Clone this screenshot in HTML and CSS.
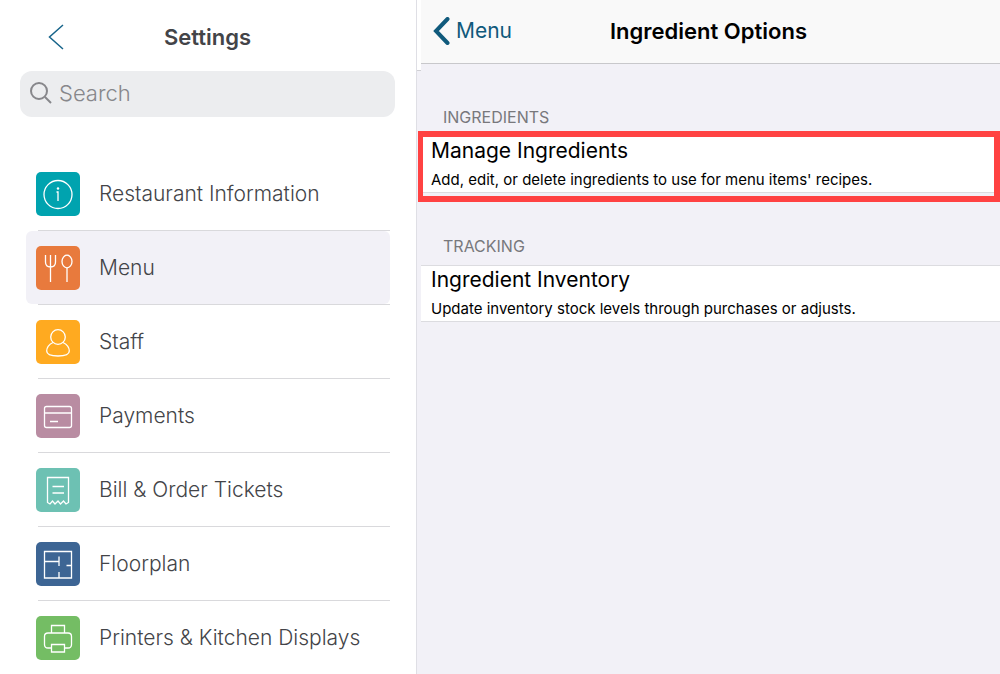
FILE: index.html
```html
<!DOCTYPE html>
<html lang="en">
<head>
    <meta charset="UTF-8">
    <meta name="viewport" content="width=device-width, initial-scale=1.0">
    <title>Settings - Ingredient Options</title>
    <link rel="stylesheet" href="styles.css">
</head>
<body>
    <div class="app">
        <aside class="sidebar">
            <header class="sidebar-header">
                <button type="button" class="back" aria-label="Back">
                    <svg width="16" height="26" viewBox="0 0 16 26"><path d="M15 1 1.500 13 15 25"/></svg>
                </button>
                <h1>Settings</h1>
            </header>

            <form class="search">
                <svg width="22" height="22" viewBox="0 0 22 22"><circle cx="9" cy="9" r="8"/><path d="m15 15 6 6"/></svg>
                <input type="search" aria-label="Search" placeholder="Search">
            </form>

            <nav>
                <ul class="settings-list">
                    <li>
                        <a href="#restaurant">
                            <span class="icon teal">
                                <svg viewBox="0 0 44 44"><circle cx="22" cy="22.500" r="14"/><path d="M20.500 20H22v9"/><circle class="dot" cx="22" cy="16.500" r="1.200"/></svg>
                            </span>
                            Restaurant Information
                        </a>
                    </li>
                    <li>
                        <a href="#menu" class="selected" aria-current="page">
                            <span class="icon orange">
                                <svg viewBox="0 0 44 44"><path d="M9.500 9v7q0 5 5 5t5-5V9M14.500 9v27M31 22v14"/><ellipse cx="31" cy="15.500" rx="5" ry="6.300"/></svg>
                            </span>
                            Menu
                        </a>
                    </li>
                    <li>
                        <a href="#staff">
                            <span class="icon yellow">
                                <svg viewBox="0 0 44 44"><circle cx="22" cy="17" r="7.300"/><path d="M17 22.500c-4 2-6.300 5-6.300 8.500 0 3.500 4.800 5 11.300 5s11.300-1.500 11.300-5c0-3.500-2.300-6.500-6.300-8.500"/></svg>
                            </span>
                            Staff
                        </a>
                    </li>
                    <li>
                        <a href="#payments">
                            <span class="icon mauve">
                                <svg viewBox="0 0 44 44"><rect x="8.500" y="12.500" width="27" height="21" rx="2"/><path d="M8.500 19h27M14 27.500h8"/></svg>
                            </span>
                            Payments
                        </a>
                    </li>
                    <li>
                        <a href="#tickets">
                            <span class="icon mint">
                                <svg viewBox="0 0 44 44"><path d="M11.500 34.500V9.500h21v25l-2.500 1.500-2.500-3-3 3-2.500-3-3 3-2.500-3-2.500 3zM16.500 18.500H28M16.500 25H28"/></svg>
                            </span>
                            Bill &amp; Order Tickets
                        </a>
                    </li>
                    <li>
                        <a href="#floorplan">
                            <span class="icon blue">
                                <svg viewBox="0 0 44 44"><path d="M8.500 9.500h27v26.500h-27zM8.500 19.500H23M23 14.500v9.500M23 30v6M30.500 23.500h5"/></svg>
                            </span>
                            Floorplan
                        </a>
                    </li>
                    <li>
                        <a href="#printers">
                            <span class="icon green">
                                <svg viewBox="0 0 44 44"><path d="M15.500 17V9.500h13V17M15.500 32H12q-3.500 0-3.500-3.500v-8Q8.500 17 12 17h20q3.500 0 3.500 3.500v8q0 3.500-3.500 3.500h-3.500M15.500 28.500h13V36h-13z"/></svg>
                            </span>
                            Printers &amp; Kitchen Displays
                        </a>
                    </li>
                </ul>
            </nav>
        </aside>

        <div class="edge"></div>

        <main class="detail">
            <header class="detail-header">
                <a href="#menu" class="menu-link">
                    <svg width="17" height="28" viewBox="0 0 17 28"><path d="M14.500 2 3 14l11.500 12"/></svg>
                    Menu
                </a>
                <h2>Ingredient Options</h2>
            </header>

            <section>
                <h3>INGREDIENTS</h3>
                <a href="#manage" class="option highlighted">
                    <span class="option-title">Manage Ingredients</span>
                    <span class="option-text">Add, edit, or delete ingredients to use for menu items' recipes.</span>
                </a>
            </section>

            <section>
                <h3>TRACKING</h3>
                <a href="#inventory" class="option">
                    <span class="option-title">Ingredient Inventory</span>
                    <span class="option-text">Update inventory stock levels through purchases or adjusts.</span>
                </a>
            </section>
        </main>
    </div>
</body>
</html>
```
FILE: styles.css
```css
* {
    box-sizing: border-box;
}

body {
    margin: 0;
    background: #fff;
    color: #434448;
    font-family: Inter, "Liberation Sans", sans-serif;
}

h1, h2, h3, ul {
    margin: 0;
    padding: 0;
}

a {
    color: inherit;
    text-decoration: none;
}

svg {
    fill: none;
    stroke: currentColor;
}

.app {
    display: grid;
    grid-template-columns: minmax(300px, 416px) 5px 1fr;
    min-height: 100vh;
    overflow: hidden;
}

/* Sidebar */
.sidebar {
    padding: 0 21px 0 20px;
}

.sidebar-header {
    display: grid;
    grid-template-columns: 1fr auto 1fr;
    align-items: center;
    height: 71px;
    padding: 2px 0 0 28px;
    margin-right: 28px;
}

.back {
    display: flex;
    padding: 0;
    border: 0;
    background: none;
    color: #17648a;
    cursor: pointer;
}

.back svg {
    stroke-width: 1.5;
}

h1 {
    font-size: 22px;
    font-weight: 600;
}

.search {
    display: flex;
    align-items: center;
    gap: 7px;
    height: 46px;
    padding: 0 10px 2px;
    border-radius: 12px;
    background: #ecedef;
    color: #87878b;
}

.search svg {
    flex: none;
    stroke-width: 2;
}

.search input {
    flex: 1;
    min-width: 0;
    padding: 0;
    border: 0;
    outline: none;
    background: none;
    font: 300 22px Inter, sans-serif;
}

.search input::placeholder {
    color: #87878b;
}

.settings-list {
    margin: 40px 5px 0 6px;
    list-style: none;
}

.settings-list li:not(:last-child)::after {
    content: "";
    display: block;
    height: 1px;
    margin-left: 12px;
    background: #d9d9dc;
}

.settings-list a {
    display: flex;
    align-items: center;
    gap: 19px;
    height: 73px;
    padding-left: 10px;
    border-radius: 6px;
    font-size: 21px;
    font-weight: 300;
}

.settings-list a.selected {
    background: #f2f1f7;
}

.icon {
    flex: none;
    width: 44px;
    height: 44px;
    border-radius: 5px;
    color: #fff;
}

.icon svg {
    display: block;
    stroke-width: 1.3;
}

.dot {
    fill: #fff;
    stroke: none;
}

.teal { background: #00a3af; }
.orange { background: #e87a3d; }
.yellow { background: #ffaa20; }
.mauve { background: #b98ca2; }
.mint { background: #6dc1b3; }
.blue { background: #3d6594; }
.green { background: #74bd64; }

/* Divider between the two panes */
.edge {
    border-left: 1px solid #dfdfe5;
    background: #f2f1f7;
}

.edge::before {
    content: "";
    display: block;
    height: 70px;
    border-bottom: 1px solid #d0d0d4;
    background: #fff;
}

/* Detail pane */
.detail {
    background: #f2f1f7;
    color: #000;
}

.detail-header {
    display: grid;
    grid-template-columns: 1fr auto 1fr;
    align-items: center;
    height: 64px;
    padding: 0 16px 2px 12px;
    border-bottom: 1px solid #c8c8cb;
    background: #f9f9f9;
}

.menu-link {
    display: flex;
    align-items: center;
    gap: 6px;
    color: #105a7c;
    font-size: 21px;
}

.menu-link svg {
    stroke-width: 4;
    stroke-linecap: round;
}

h2 {
    font-size: 22px;
    font-weight: 600;
}

h3 {
    padding: 43px 22px 8px;
    color: #78787c;
    font-size: 16px;
    font-weight: 400;
    line-height: 21px;
}

.option {
    position: relative;
    display: block;
    height: 57px;
    padding: 0 10px;
    border: solid #dcdce0;
    border-width: 1px 0;
    background: #fff;
}

.option-title {
    display: block;
    font-size: 21px;
    line-height: 27px;
}

.option-text {
    display: block;
    font-size: 15px;
    line-height: 32px;
}

.highlighted::after {
    content: "";
    position: absolute;
    inset: -6px 0 -10px -3px;
    border: 6px solid #ff4242;
    border-left-width: 5px;
}
```
